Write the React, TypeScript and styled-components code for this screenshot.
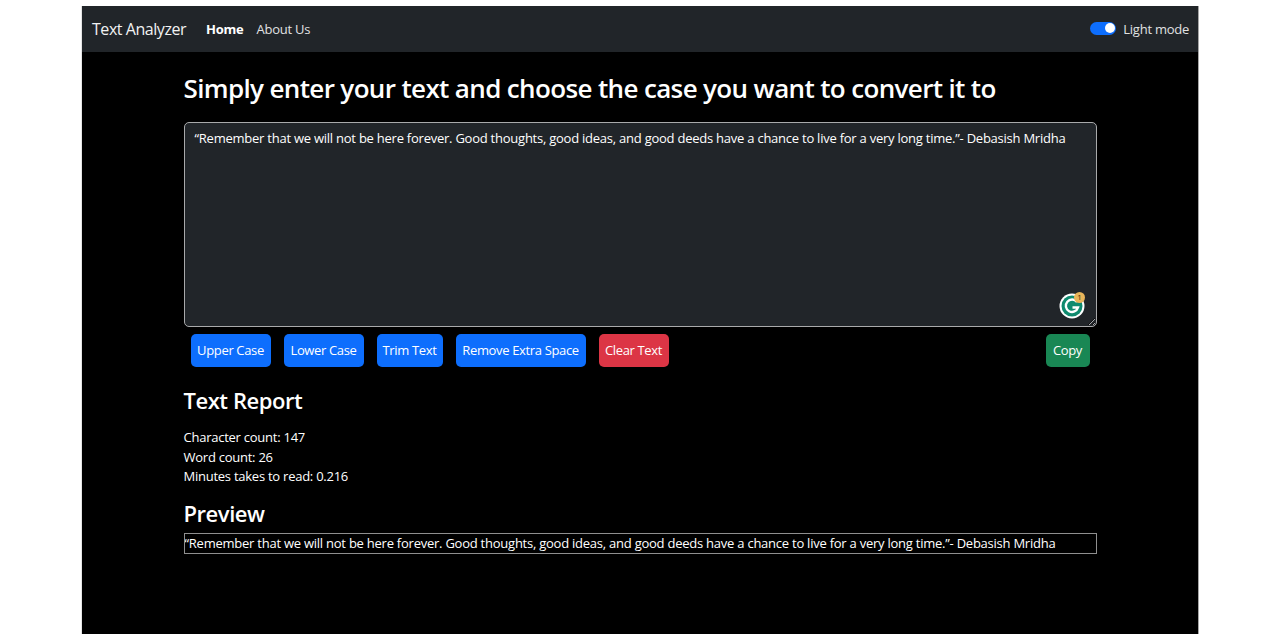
import { useState } from "react";
import styled, { createGlobalStyle } from "styled-components";

const QUOTE =
  "“Remember that we will not be here forever. Good thoughts, good ideas, and good deeds have a chance to live for a very long time.”- Debasish Mridha";

const GlobalStyle = createGlobalStyle`
  html, body {
    margin: 0;
    padding: 0;
    background: #fff;
  }
  body {
    font-family: "Open Sans", "Noto Sans", sans-serif;
  }
`;

const Page = styled.div`
  height: 640px;
  box-sizing: border-box;
  padding: 6px 81px;
`;

const Frame = styled.div`
  height: 628px;
  background: #000;
  color: #fff;
  display: flex;
  flex-direction: column;
  border-left: 1px solid #e4e4e4;
  border-right: 1px solid #a6a6a6;
`;

const Navbar = styled.nav`
  height: 46px;
  flex: none;
  background: #212529;
  display: flex;
  align-items: center;
  padding: 0 9px 0 10px;
`;

const Brand = styled.span`
  font-size: 16px;
  letter-spacing: -0.45px;
  color: #f2f2f2;
  margin-right: 20px;
`;

const NavLink = styled.a<{ $active?: boolean }>`
  font-size: 13px;
  letter-spacing: -0.25px;
  font-weight: ${({ $active }) => ($active ? 700 : 400)};
  color: ${({ $active }) => ($active ? "#fff" : "#e0e1e2")};
  margin-right: 13px;
`;

const ModeSwitch = styled.label`
  margin-left: auto;
  display: flex;
  align-items: center;
  gap: 7px;
  font-size: 13px;
  letter-spacing: -0.25px;
  color: #e0e1e2;
`;

const SwitchTrack = styled.span`
  width: 26px;
  height: 13px;
  margin-top: -2px;
  border-radius: 7px;
  background: #0d6efd;
  display: flex;
  align-items: center;
  justify-content: flex-end;
  padding: 0 1px;
  box-sizing: border-box;
`;

const SwitchKnob = styled.span`
  width: 10px;
  height: 10px;
  border-radius: 50%;
  background: #fff;
`;

const Content = styled.main`
  width: 913px;
  margin: 0 auto;
  padding-top: 18px;
`;

const Heading = styled.h1`
  margin: 0 0 15px;
  font-size: 26px;
  line-height: 37px;
  font-weight: 600;
  letter-spacing: -0.64px;
`;

const EditorWrap = styled.div`
  position: relative;
  height: 205px;
`;

const Editor = styled.textarea`
  display: block;
  width: 100%;
  height: 100%;
  box-sizing: border-box;
  margin: 0;
  padding: 6px 10px;
  background: #212529;
  color: #fff;
  border: 1px solid #a9aaab;
  border-radius: 5px;
  font-family: inherit;
  font-size: 13px;
  line-height: 19.5px;
  letter-spacing: -0.24px;
  outline: none;
`;

const BadgeIcon = styled.svg`
  position: absolute;
  right: 10px;
  bottom: 8px;
`;

const ButtonRow = styled.div`
  display: flex;
  gap: 13px;
  padding: 7px 7px 0;
`;

const ActionButton = styled.button<{ $tone: string; $width: number; $push?: boolean }>`
  height: 33px;
  width: ${({ $width }) => $width}px;
  padding: 0 0 2px;
  border: none;
  border-radius: 5px;
  background: ${({ $tone }) => $tone};
  color: #fff;
  font-family: inherit;
  font-size: 13px;
  letter-spacing: -0.35px;
  margin-left: ${({ $push }) => ($push ? "auto" : "0")};
`;

const SubHeading = styled.h2`
  margin: 0;
  font-size: 22px;
  line-height: 30px;
  font-weight: 600;
  letter-spacing: -0.45px;
`;

const ReportHeading = styled(SubHeading)`
  margin-top: 18px;
`;

const PreviewHeading = styled(SubHeading)`
  margin-top: 11px;
`;

const Stats = styled.div`
  margin-top: 13px;
  font-size: 13px;
  line-height: 19.5px;
  letter-spacing: -0.25px;
`;

const PreviewBox = styled.div`
  margin-top: 5px;
  height: 21px;
  box-sizing: border-box;
  border: 1px solid #8f8f8f;
  font-size: 13px;
  line-height: 19px;
  letter-spacing: -0.24px;
  white-space: nowrap;
  overflow: hidden;
`;

export default function App() {
  const [text, setText] = useState(QUOTE);

  return (
    <Page>
      <GlobalStyle />
      <Frame>
        <Navbar>
          <Brand>Text Analyzer</Brand>
          <NavLink $active>Home</NavLink>
          <NavLink>About Us</NavLink>
          <ModeSwitch>
            <SwitchTrack>
              <SwitchKnob />
            </SwitchTrack>
            Light mode
          </ModeSwitch>
        </Navbar>
        <Content>
          <Heading>Simply enter your text and choose the case you want to convert it to</Heading>
          <EditorWrap>
            <Editor value={text} onChange={(e) => setText(e.target.value)} />
            <BadgeIcon width="28" height="28" viewBox="0 0 28 28">
              <circle cx="13" cy="15" r="12.5" fill="#fff" />
              <circle cx="13" cy="15" r="10.5" fill="#0f8a6e" />
              <path d="M18 11 A6.2 6.2 0 1 0 19 16.5 H13.5" fill="none" stroke="#fff" strokeWidth="2.4" />
              <circle cx="20.5" cy="6.5" r="5.5" fill="#e8b55a" />
              <text x="20.5" y="9.3" fontSize="8" textAnchor="middle" fill="#4a3200" fontFamily="Open Sans">1</text>
            </BadgeIcon>
          </EditorWrap>
          <ButtonRow>
            <ActionButton $tone="#0d6efd" $width={80}>Upper Case</ActionButton>
            <ActionButton $tone="#0d6efd" $width={80}>Lower Case</ActionButton>
            <ActionButton $tone="#0d6efd" $width={66}>Trim Text</ActionButton>
            <ActionButton $tone="#0d6efd" $width={130}>Remove Extra Space</ActionButton>
            <ActionButton $tone="#dc3545" $width={70}>Clear Text</ActionButton>
            <ActionButton $tone="#198754" $width={44} $push>Copy</ActionButton>
          </ButtonRow>
          <ReportHeading>Text Report</ReportHeading>
          <Stats>
            <div>Character count: {text.length}</div>
            <div>Word count: {text.split(" ").length - 1}</div>
            <div>Minutes takes to read: 0.216</div>
          </Stats>
          <PreviewHeading>Preview</PreviewHeading>
          <PreviewBox>{text}</PreviewBox>
        </Content>
      </Frame>
    </Page>
  );
}
